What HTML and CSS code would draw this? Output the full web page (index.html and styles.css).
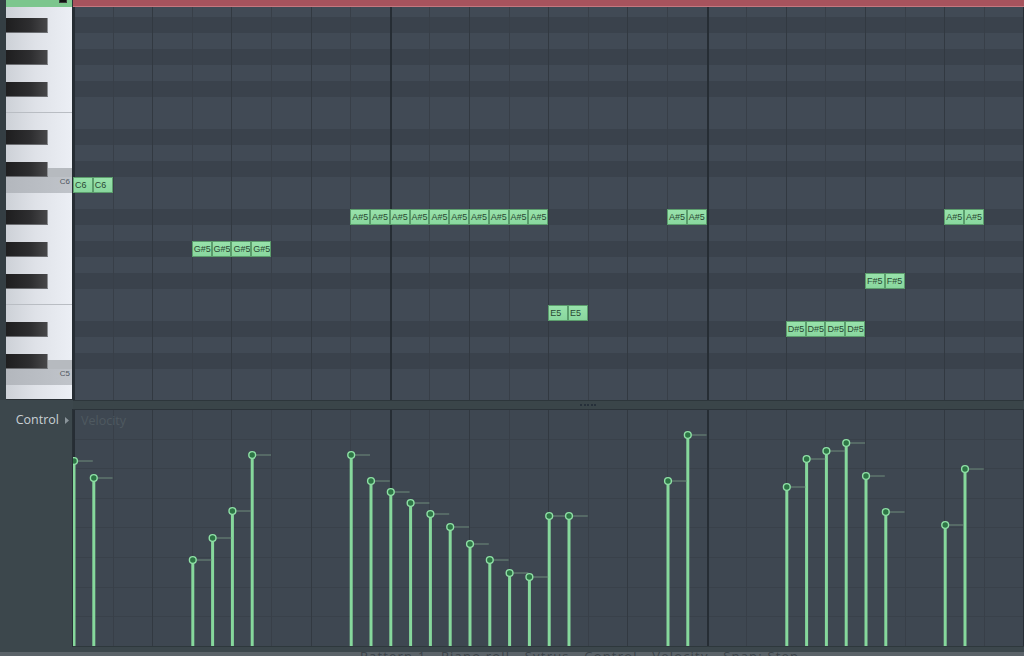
FILE: index.html
```html
<!DOCTYPE html>
<html>
<head>
<meta charset="utf-8">
<link rel="stylesheet" href="styles.css">
</head>
<body>
<div class="app">
  <div class="c1 r1 strip"></div>
  <div class="c2 r1 green"><span class="blk"></span></div>
  <div class="c3 r1 red"></div>

  <div class="c1 r2 strip"></div>
  <div class="c2 r2 keys">
    <div class="keycol">
      <div class="k"></div>
      <div class="k b"><span class="bk"></span></div>
      <div class="k"></div>
      <div class="k b"><span class="bk"></span></div>
      <div class="k"></div>
      <div class="k b"><span class="bk"></span></div>
      <div class="k f"></div>
      <div class="k"></div>
      <div class="k b"><span class="bk"></span></div>
      <div class="k"></div>
      <div class="k b cs"><span class="bk"></span></div>
      <div class="k c"><span class="lbl">C6</span></div>
      <div class="k"></div>
      <div class="k b"><span class="bk"></span></div>
      <div class="k"></div>
      <div class="k b"><span class="bk"></span></div>
      <div class="k"></div>
      <div class="k b"><span class="bk"></span></div>
      <div class="k f"></div>
      <div class="k"></div>
      <div class="k b"><span class="bk"></span></div>
      <div class="k"></div>
      <div class="k b cs"><span class="bk"></span></div>
      <div class="k c"><span class="lbl">C5</span></div>
      <div class="k"></div>
    </div>
  </div>
  <div class="c3 r2 roll">
    <div class="rows">
      <div class="rw"></div><div class="rw b"></div><div class="rw"></div><div class="rw b"></div>
      <div class="rw"></div><div class="rw b"></div><div class="rw"></div><div class="rw"></div>
      <div class="rw b"></div><div class="rw"></div><div class="rw b"></div><div class="rw"></div>
      <div class="rw"></div><div class="rw b"></div><div class="rw"></div><div class="rw b"></div>
      <div class="rw"></div><div class="rw b"></div><div class="rw"></div><div class="rw"></div>
      <div class="rw b"></div><div class="rw"></div><div class="rw b"></div><div class="rw"></div>
      <div class="rw"></div>
    </div>
    <div class="vlines"></div>
    <div class="note" style="left:0px;top:170px">C6</div>
    <div class="note" style="left:19.8px;top:170px">C6</div>
    <div class="note" style="left:118.8px;top:234px">G#5</div>
    <div class="note" style="left:138.6px;top:234px">G#5</div>
    <div class="note" style="left:158.4px;top:234px">G#5</div>
    <div class="note" style="left:178.2px;top:234px">G#5</div>
    <div class="note" style="left:277.2px;top:202px">A#5</div>
    <div class="note" style="left:297px;top:202px">A#5</div>
    <div class="note" style="left:316.8px;top:202px">A#5</div>
    <div class="note" style="left:336.6px;top:202px">A#5</div>
    <div class="note" style="left:356.4px;top:202px">A#5</div>
    <div class="note" style="left:376.2px;top:202px">A#5</div>
    <div class="note" style="left:396px;top:202px">A#5</div>
    <div class="note" style="left:415.8px;top:202px">A#5</div>
    <div class="note" style="left:435.6px;top:202px">A#5</div>
    <div class="note" style="left:455.4px;top:202px">A#5</div>
    <div class="note" style="left:475.2px;top:298px">E5</div>
    <div class="note" style="left:495px;top:298px">E5</div>
    <div class="note" style="left:594px;top:202px">A#5</div>
    <div class="note" style="left:613.8px;top:202px">A#5</div>
    <div class="note" style="left:712.8px;top:314px">D#5</div>
    <div class="note" style="left:732.6px;top:314px">D#5</div>
    <div class="note" style="left:752.4px;top:314px">D#5</div>
    <div class="note" style="left:772.2px;top:314px">D#5</div>
    <div class="note" style="left:792px;top:266px">F#5</div>
    <div class="note" style="left:811.8px;top:266px">F#5</div>
    <div class="note" style="left:871.2px;top:202px">A#5</div>
    <div class="note" style="left:891px;top:202px">A#5</div>
  </div>

  <div class="c12 r3 blank"></div>
  <div class="c3 r3 sep"><span class="dots"></span></div>

  <div class="c12 r4 ctl-label"><span class="ctl-text">Control</span><svg class="tri" width="4" height="7" viewBox="0 0 4 7"><path d="M0 0 L4 3.5 L0 7 Z" fill="#8a949a"/></svg></div>
  <div class="c3 r4 ctl">
    <div class="hlines"></div>
    <div class="vlines"></div>
    <span class="vel-label">Velocity</span>
    <svg class="vel" width="951" height="236" viewBox="0 0 951 236">
      <g class="stem">
        <rect x="-0.5" y="51" width="3" height="190"/>
        <rect x="19.3" y="68" width="3" height="190"/>
        <rect x="118.3" y="150" width="3" height="90"/>
        <rect x="138.1" y="128" width="3" height="110"/>
        <rect x="157.9" y="101" width="3" height="140"/>
        <rect x="177.7" y="45" width="3" height="195"/>
        <rect x="276.7" y="45" width="3" height="195"/>
        <rect x="296.5" y="71" width="3" height="170"/>
        <rect x="316.3" y="82" width="3" height="160"/>
        <rect x="336.1" y="93" width="3" height="150"/>
        <rect x="355.9" y="104" width="3" height="140"/>
        <rect x="375.7" y="117" width="3" height="120"/>
        <rect x="395.5" y="134" width="3" height="110"/>
        <rect x="415.3" y="150" width="3" height="90"/>
        <rect x="435.1" y="163" width="3" height="80"/>
        <rect x="454.9" y="167" width="3" height="70"/>
        <rect x="474.7" y="106" width="3" height="140"/>
        <rect x="494.5" y="106" width="3" height="140"/>
        <rect x="593.5" y="71" width="3" height="170"/>
        <rect x="613.3" y="25" width="3" height="215"/>
        <rect x="712.3" y="77" width="3" height="165"/>
        <rect x="732.1" y="49" width="3" height="190"/>
        <rect x="751.9" y="41" width="3" height="200"/>
        <rect x="771.7" y="33" width="3" height="205"/>
        <rect x="791.5" y="66" width="3" height="175"/>
        <rect x="811.3" y="102" width="3" height="140"/>
        <rect x="870.7" y="115" width="3" height="125"/>
        <rect x="890.5" y="59" width="3" height="180"/>
      </g>
      <g class="tail">
        <line x1="4" y1="51" x2="19.8" y2="51"/>
        <line x1="23.8" y1="68" x2="39.6" y2="68"/>
        <line x1="122.8" y1="150" x2="138.6" y2="150"/>
        <line x1="142.6" y1="128" x2="158.4" y2="128"/>
        <line x1="162.4" y1="101" x2="178.2" y2="101"/>
        <line x1="182.2" y1="45" x2="198" y2="45"/>
        <line x1="281.2" y1="45" x2="297" y2="45"/>
        <line x1="301" y1="71" x2="316.8" y2="71"/>
        <line x1="320.8" y1="82" x2="336.6" y2="82"/>
        <line x1="340.6" y1="93" x2="356.4" y2="93"/>
        <line x1="360.4" y1="104" x2="376.2" y2="104"/>
        <line x1="380.2" y1="117" x2="396" y2="117"/>
        <line x1="400" y1="134" x2="415.8" y2="134"/>
        <line x1="419.8" y1="150" x2="435.6" y2="150"/>
        <line x1="439.6" y1="163" x2="455.4" y2="163"/>
        <line x1="459.4" y1="167" x2="475.2" y2="167"/>
        <line x1="479.2" y1="106" x2="495" y2="106"/>
        <line x1="499" y1="106" x2="514.8" y2="106"/>
        <line x1="598" y1="71" x2="613.8" y2="71"/>
        <line x1="617.8" y1="25" x2="633.6" y2="25"/>
        <line x1="716.8" y1="77" x2="732.6" y2="77"/>
        <line x1="736.6" y1="49" x2="752.4" y2="49"/>
        <line x1="756.4" y1="41" x2="772.2" y2="41"/>
        <line x1="776.2" y1="33" x2="792" y2="33"/>
        <line x1="796" y1="66" x2="811.8" y2="66"/>
        <line x1="815.8" y1="102" x2="831.6" y2="102"/>
        <line x1="875.2" y1="115" x2="891" y2="115"/>
        <line x1="895" y1="59" x2="910.8" y2="59"/>
      </g>
      <g class="knob">
        <circle cx="1" cy="51" r="3.4"/>
        <circle cx="20.8" cy="68" r="3.4"/>
        <circle cx="119.8" cy="150" r="3.4"/>
        <circle cx="139.6" cy="128" r="3.4"/>
        <circle cx="159.4" cy="101" r="3.4"/>
        <circle cx="179.2" cy="45" r="3.4"/>
        <circle cx="278.2" cy="45" r="3.4"/>
        <circle cx="298" cy="71" r="3.4"/>
        <circle cx="317.8" cy="82" r="3.4"/>
        <circle cx="337.6" cy="93" r="3.4"/>
        <circle cx="357.4" cy="104" r="3.4"/>
        <circle cx="377.2" cy="117" r="3.4"/>
        <circle cx="397" cy="134" r="3.4"/>
        <circle cx="416.8" cy="150" r="3.4"/>
        <circle cx="436.6" cy="163" r="3.4"/>
        <circle cx="456.4" cy="167" r="3.4"/>
        <circle cx="476.2" cy="106" r="3.4"/>
        <circle cx="496" cy="106" r="3.4"/>
        <circle cx="595" cy="71" r="3.4"/>
        <circle cx="614.8" cy="25" r="3.4"/>
        <circle cx="713.8" cy="77" r="3.4"/>
        <circle cx="733.6" cy="49" r="3.4"/>
        <circle cx="753.4" cy="41" r="3.4"/>
        <circle cx="773.2" cy="33" r="3.4"/>
        <circle cx="793" cy="66" r="3.4"/>
        <circle cx="812.8" cy="102" r="3.4"/>
        <circle cx="872.2" cy="115" r="3.4"/>
        <circle cx="892" cy="59" r="3.4"/>
      </g>
    </svg>
  </div>

  <div class="c123 r5 blank"></div>
  <div class="c123 r6 status"><span class="status-text">Pattern 1 - Piano roll - Sytrus - Control - Velocity - Snap: Step</span></div>
</div>
</body>
</html>
```
FILE: styles.css
```css
html, body {
  margin: 0;
  padding: 0;
  background: #3c474c;
}
body {
  font-family: "Open Sans", "Liberation Sans", sans-serif;
  overflow: hidden;
}
.app {
  display: grid;
  grid-template-columns: 6px 67px 951px;
  grid-template-rows: 7px 393px 9px 238px 5px 4px;
  width: 1024px;
  height: 656px;
  overflow: hidden;
}
.c1 { grid-column: 1; }
.c2 { grid-column: 2; }
.c3 { grid-column: 3; }
.c12 { grid-column: 1 / 3; }
.c123 { grid-column: 1 / 4; }
.r1 { grid-row: 1; }
.r2 { grid-row: 2; }
.r3 { grid-row: 3; }
.r4 { grid-row: 4; }
.r5 { grid-row: 5; }
.r6 { grid-row: 6; }

.strip { background: #343e43; }

.green {
  background: #7cc68d;
  border-right: 1px solid #2a3238;
  display: flex;
  justify-content: flex-end;
  align-items: flex-start;
}
.blk {
  width: 6px;
  height: 2px;
  margin-right: 5px;
  background: #111;
  border: 1px solid #3a3a3a;
  border-top: none;
}
.red {
  background: #a7535d;
  border-bottom: 1px solid #c57880;
}

/* piano keys */
.keys {
  border-right: 1px solid #252c32;
  border-bottom: 1px solid #2a3035;
  overflow: hidden;
  background: linear-gradient(to right, #cdd1d7 0%, #dfe2e8 45%, #eceff5 100%);
  box-sizing: border-box;
}
.keycol {
  margin-top: -6px;
  display: flex;
  flex-direction: column;
}
.k {
  height: 16px;
  flex: none;
  box-sizing: border-box;
  display: flex;
  align-items: flex-start;
}
.k.f { border-bottom: 1px solid #b9bdc3; }
.k.c {
  background: linear-gradient(to right, #b3b7bd, #c0c4ca);
  justify-content: flex-end;
}
.k.cs {
  background: linear-gradient(to bottom, transparent 0 45%, #b6babf 45% 100%);
}
.bk {
  width: 42px;
  height: 15px;
  margin-top: 1px;
  box-sizing: border-box;
  background: linear-gradient(to right, #1e1e1f 0%, #2e2e30 60%, #474749 100%);
  border-right: 1px solid #8c8e92;
  border-bottom: 1px solid #6a6c70;
}
.lbl {
  font-family: "Liberation Sans", "DejaVu Sans", sans-serif;
  font-size: 8px;
  line-height: 10px;
  color: #4f5760;
  padding-right: 2px;
}

/* roll grid */
.roll {
  position: relative;
  overflow: hidden;
}
.rows {
  margin-top: -6px;
  display: flex;
  flex-direction: column;
}
.rw {
  height: 16px;
  flex: none;
  background: #414a55;
}
.rw.b { background: #3a424c; }
.vlines {
  position: absolute;
  inset: 0;
  background-image:
    repeating-linear-gradient(to right, #262d34 0 2px, transparent 2px 316.8px),
    repeating-linear-gradient(to right, #323941 0 1px, transparent 1px 79.2px),
    repeating-linear-gradient(to right, #383f48 0 1px, transparent 1px 39.6px);
}
.note {
  position: absolute;
  z-index: 2;
  width: 19.8px;
  height: 16px;
  box-sizing: border-box;
  background: linear-gradient(to bottom, #98e2ab, #89d79e);
  border: 1px solid #5b9d6c;
  color: #2a4833;
  font-family: "Liberation Sans", "DejaVu Sans", sans-serif;
  font-size: 9px;
  line-height: 14px;
  padding-left: 1px;
  white-space: nowrap;
  overflow: hidden;
}

/* separator */
.sep {
  background: #3a4549;
  border-top: 1px solid #2d363b;
  display: flex;
  align-items: center;
  box-sizing: border-box;
}
.dots {
  margin-left: 507px;
  width: 17px;
  height: 2px;
  background-image: repeating-linear-gradient(to right, #26303a 0 2px, transparent 2px 3.6px);
}

/* control lane */
.ctl-label {
  border-right: 1px solid #283036;
  display: flex;
  justify-content: flex-end;
  align-items: center;
  align-self: start;
  height: 22px;
  gap: 6px;
  padding-right: 3px;
  padding-top: 1px;
}
.ctl-text {
  color: #c9d0d4;
  font-size: 12.5px;
}
.tri { display: block; }
.ctl-label { box-sizing: border-box; }
.r4.ctl-label { height: 238px; align-items: flex-start; padding-top: 2px; }
.r4.ctl-label .tri { margin-top: 6px; }
.ctl {
  position: relative;
  background: #3e4751;
  border-top: 1px solid #2b3339;
  border-bottom: 1px solid #2e383c;
  overflow: hidden;
}
.hlines {
  position: absolute;
  inset: 0;
  background-image: repeating-linear-gradient(to bottom, transparent 0 28.6px, #39414a 28.6px 29.6px);
}
.vel-label {
  position: absolute;
  left: 8px;
  top: 2px;
  color: #4e5960;
  font-size: 12.5px;
  z-index: 1;
}
.vel {
  position: absolute;
  left: 0;
  top: 0;
  z-index: 2;
}
.stem rect { fill: #86d89c; }
.tail line { stroke: #6f8d7c; stroke-width: 1; }
.knob circle { fill: #2d7545; stroke: #8fe0a6; stroke-width: 1.4; }

/* status */
.status {
  background: #5b6369;
  overflow: hidden;
}
.status-text {
  display: block;
  padding-left: 360px;
  color: #3c4449;
  font-size: 13px;
  line-height: 9px;
  letter-spacing: 1.2px;
  white-space: nowrap;
}
```
